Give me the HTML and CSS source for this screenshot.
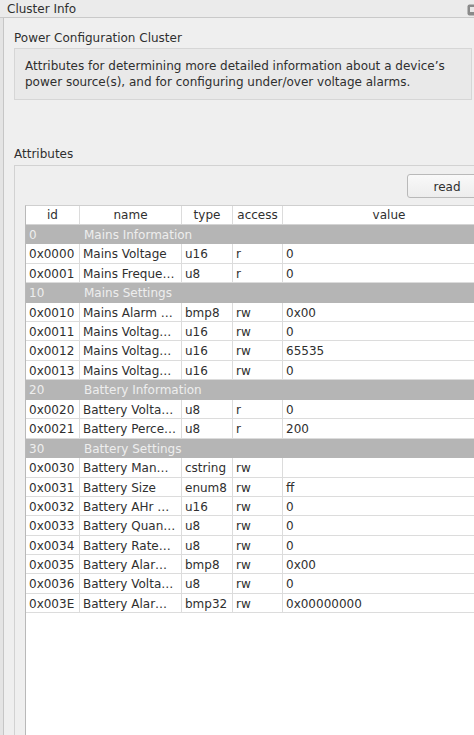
FILE: index.html
```html
<!DOCTYPE html>
<html>
<head>
<meta charset="utf-8">
<link rel="stylesheet" href="styles.css">
</head>
<body>
<div class="window">
  <div class="titlebar">
    <span class="title">Cluster Info</span>
    <svg class="float-btn" width="10" height="12" viewBox="0 0 10 12"><rect x="0.5" y="0.5" width="9" height="11" rx="2" fill="#8a8a8a"/><rect x="3" y="3" width="5" height="5" fill="#e8e8e8"/></svg>
  </div>
  <div class="panel">
    <div class="cluster-name">Power Configuration Cluster</div>
    <div class="desc">Attributes for determining more detailed information about a device’s<br>power source(s), and for configuring under/over voltage alarms.</div>
    <div class="attr-label">Attributes</div>
    <div class="group">
      <div class="toolbar"><button class="read">read</button></div>
      <div class="table">
        <div class="row head"><div>id</div><div>name</div><div>type</div><div>access</div><div>value</div></div>
        <div class="row grp"><div>0</div><div class="span">Mains Information</div></div>
        <div class="row"><div>0x0000</div><div>Mains Voltage</div><div>u16</div><div>r</div><div>0</div></div>
        <div class="row"><div>0x0001</div><div>Mains Freque…</div><div>u8</div><div>r</div><div>0</div></div>
        <div class="row grp"><div>10</div><div class="span">Mains Settings</div></div>
        <div class="row"><div>0x0010</div><div>Mains Alarm …</div><div>bmp8</div><div>rw</div><div>0x00</div></div>
        <div class="row"><div>0x0011</div><div>Mains Voltag…</div><div>u16</div><div>rw</div><div>0</div></div>
        <div class="row"><div>0x0012</div><div>Mains Voltag…</div><div>u16</div><div>rw</div><div>65535</div></div>
        <div class="row"><div>0x0013</div><div>Mains Voltag…</div><div>u16</div><div>rw</div><div>0</div></div>
        <div class="row grp"><div>20</div><div class="span">Battery Information</div></div>
        <div class="row"><div>0x0020</div><div>Battery Volta…</div><div>u8</div><div>r</div><div>0</div></div>
        <div class="row"><div>0x0021</div><div>Battery Perce…</div><div>u8</div><div>r</div><div>200</div></div>
        <div class="row grp"><div>30</div><div class="span">Battery Settings</div></div>
        <div class="row"><div>0x0030</div><div>Battery Man…</div><div>cstring</div><div>rw</div><div></div></div>
        <div class="row"><div>0x0031</div><div>Battery Size</div><div>enum8</div><div>rw</div><div>ff</div></div>
        <div class="row"><div>0x0032</div><div>Battery AHr …</div><div>u16</div><div>rw</div><div>0</div></div>
        <div class="row"><div>0x0033</div><div>Battery Quan…</div><div>u8</div><div>rw</div><div>0</div></div>
        <div class="row"><div>0x0034</div><div>Battery Rate…</div><div>u8</div><div>rw</div><div>0</div></div>
        <div class="row"><div>0x0035</div><div>Battery Alar…</div><div>bmp8</div><div>rw</div><div>0x00</div></div>
        <div class="row"><div>0x0036</div><div>Battery Volta…</div><div>u8</div><div>rw</div><div>0</div></div>
        <div class="row"><div>0x003E</div><div>Battery Alar…</div><div>bmp32</div><div>rw</div><div>0x00000000</div></div>
      </div>
    </div>
  </div>
</div>
</body>
</html>
```

FILE: styles.css
```css
html, body {
  margin: 0;
  padding: 0;
}
body {
  width: 474px;
  height: 735px;
  overflow: hidden;
  background: #e4e4e4;
  font-family: "DejaVu Sans", "Liberation Sans", sans-serif;
  font-size: 12px;
  color: #2f2f2f;
}
.window {
  display: flex;
  flex-direction: column;
  height: 735px;
}
.titlebar {
  height: 17px;
  line-height: 18px;
  border-bottom: 1px solid #c9c9c9;
  background: #ebebeb;
  display: flex;
  justify-content: space-between;
  align-items: center;
  padding-left: 7px;
  overflow: hidden;
}
.float-btn {
  flex: none;
  margin-right: -3px;
  margin-top: 2px;
}
.panel {
  flex: 1;
  margin-left: 3px;
  border-left: 1px solid #c6c6c6;
  background: #efefef;
  padding-left: 10px;
  display: flex;
  flex-direction: column;
  min-height: 0;
}
.cluster-name {
  margin-top: 12px;
  line-height: 16px;
}
.desc {
  margin-top: 2px;
  width: 436px;
  border: 1px solid #d6d6d6;
  background: #e9e9e9;
  padding: 9px 10px 9px 10px;
  line-height: 16px;
}
.attr-label {
  margin-top: 46px;
  line-height: 16px;
}
.group {
  margin-top: 3px;
  flex: 1;
  width: 470px;
  border: 1px solid #d2d2d2;
  border-bottom: none;
  padding: 8px 0 0 10px;
  display: flex;
  flex-direction: column;
  min-height: 0;
}
.toolbar {
  display: flex;
  justify-content: flex-end;
  padding-right: 8px;
}
.read {
  width: 80px;
  height: 24px;
  border: 1px solid #b9b9b9;
  border-radius: 3px;
  background: linear-gradient(#f9f9f9, #ededed);
  font-family: inherit;
  font-size: 12px;
  color: #2f2f2f;
  padding: 1px 0 0 0;
}
.table {
  margin-top: 7px;
  flex: 1;
  background: #fff;
  border-top: 1px solid #cfcfcf;
  border-left: 1px solid #b9b9b9;
}
.row {
  display: grid;
  grid-template-columns: 54px 102px 51px 50px 1fr;
  height: 19.33px;
  box-sizing: border-box;
  border-bottom: 1px solid #dcdcdc;
  line-height: 20px;
}
.row > div {
  border-right: 1px solid #dcdcdc;
  padding-left: 3px;
  white-space: nowrap;
  overflow: hidden;
}
.row > div:last-child {
  border-right: none;
}
.row.head {
  height: 18.5px;
  line-height: 19px;
  border-bottom: 1px solid #d4d4d4;
}
.row.head > div {
  text-align: center;
  padding-left: 0;
}
.row.grp {
  background: #b5b5b5;
  color: #eeeeee;
  border-bottom: none;
  height: 19.83px;
}
.row.grp > div {
  border-right: none;
}
.row.grp > .span {
  grid-column: 2 / -1;
  padding-left: 4px;
}
```
